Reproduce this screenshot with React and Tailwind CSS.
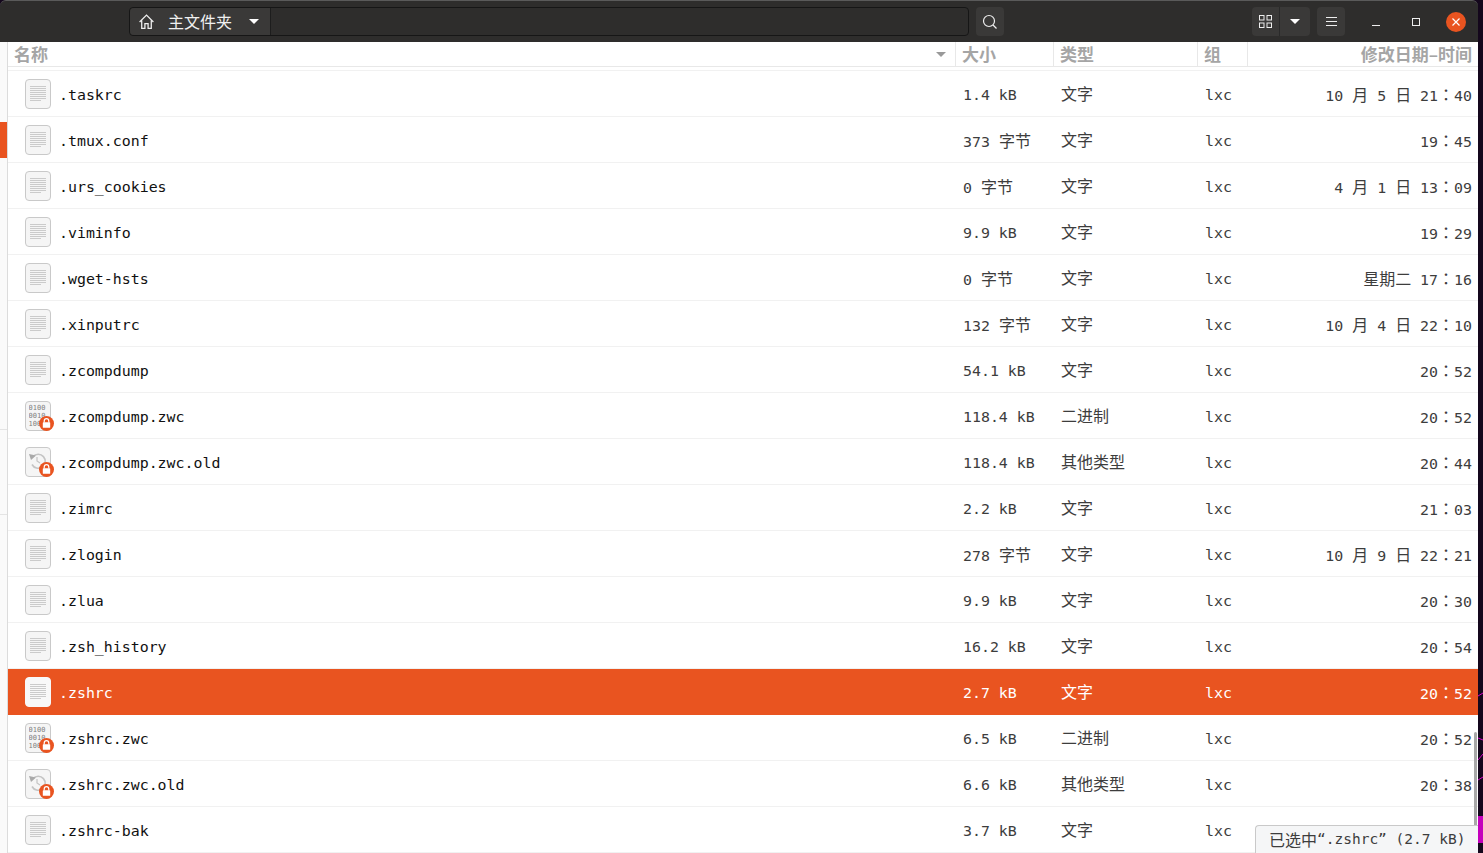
import React from 'react';

const mono = "font-['DejaVu_Sans_Mono','Noto_Sans_CJK_SC',monospace]";

const files = [
  ['.taskrc', '1.4 kB', '文字', '10 月 5 日 21：40'],
  ['.tmux.conf', '373 字节', '文字', '19：45'],
  ['.urs_cookies', '0 字节', '文字', '4 月 1 日 13：09'],
  ['.viminfo', '9.9 kB', '文字', '19：29'],
  ['.wget-hsts', '0 字节', '文字', '星期二 17：16'],
  ['.xinputrc', '132 字节', '文字', '10 月 4 日 22：10'],
  ['.zcompdump', '54.1 kB', '文字', '20：52'],
  ['.zcompdump.zwc', '118.4 kB', '二进制', '20：52', 'bin'],
  ['.zcompdump.zwc.old', '118.4 kB', '其他类型', '20：44', 'old'],
  ['.zimrc', '2.2 kB', '文字', '21：03'],
  ['.zlogin', '278 字节', '文字', '10 月 9 日 22：21'],
  ['.zlua', '9.9 kB', '文字', '20：30'],
  ['.zsh_history', '16.2 kB', '文字', '20：54'],
  ['.zshrc', '2.7 kB', '文字', '20：52'],
  ['.zshrc.zwc', '6.5 kB', '二进制', '20：52', 'bin'],
  ['.zshrc.zwc.old', '6.6 kB', '其他类型', '20：38', 'old'],
  ['.zshrc-bak', '3.7 kB', '文字', ''],
];

// latin runs stay mono, CJK runs get the wider 16px font like the GTK fallback does
const MixedText = ({ text }) =>
  text.split(/([\u4e00-\u9fff]+|：)/).map((part, i) => {
    if (part === '：') {
      return <span key={i} className="text-[16px] font-['Noto_Sans_CJK_TC',sans-serif]">{part}</span>;
    }
    if (/[\u4e00-\u9fff]/.test(part)) {
      return <span key={i} className="text-[16px] font-['Noto_Sans_CJK_SC',sans-serif]">{part}</span>;
    }
    return <span key={i}>{part}</span>;
  });

const FileIcon = ({ kind, selected }) => (
  <div className="relative w-[26px] h-[30px] shrink-0">
    <div className={`w-[26px] h-[30px] rounded-[4px] border flex flex-col items-center justify-center ${selected ? 'bg-[#f8f8f8] border-[#f8f8f8]' : 'bg-[#f5f5f5] border-[#c9c9c9]'}`}>
      {!kind && (
        <div className="flex flex-col gap-[1px] w-4">
          {[...Array(8)].map((_, i) => (
            <div key={i} className={`h-px bg-[#cbcbcb] ${i === 7 ? 'w-2/3' : ''}`} />
          ))}
        </div>
      )}
      {kind === 'bin' && (
        <div className="font-['DejaVu_Sans_Mono',monospace] text-[7px] leading-[8px] text-[#808080] w-[17px] -ml-[2px] mt-[1px] overflow-hidden whitespace-pre">
          <div>0100</div>
          <div>0010</div>
          <div>1001</div>
        </div>
      )}
      {kind === 'old' && (
        <svg width="20" height="20" viewBox="0 0 20 20" fill="none" className="-ml-[2px] -mt-[2px]">
          <path d="M6 5.5a7 7 0 1 1-1 8" stroke="#c4c4c4" strokeWidth="1.6" />
          <path d="M2 3l7 1.5L4 9z" fill="#a9a9a9" />
          <path d="M10 6v4l3 2" stroke="#c4c4c4" strokeWidth="1.2" />
        </svg>
      )}
    </div>
    {kind && (
      <div className="absolute -right-[3px] bottom-0 w-[15px] h-[15px] rounded-full bg-[#e95420] flex items-center justify-center">
        <svg width="9" height="10" viewBox="0 0 9 10">
          <path d="M2.2 4.5V3a2.3 2.3 0 0 1 4.6 0v1.5" fill="none" stroke="#fff" strokeWidth="1.2" />
          <rect x="0.8" y="4.3" width="7.4" height="5.5" rx="0.6" fill="#fff" />
        </svg>
      </div>
    )}
  </div>
);

const Row = ({ file }) => {
  const [name, size, type, date, kind] = file;
  const selected = name === '.zshrc';
  return (
    <div className={`flex items-center h-[46px] border-b text-[14.9px] leading-[20px] ${mono} ${selected ? 'bg-[#e95420] border-[#e95420] text-white' : 'border-[#f1f1f1] text-[#3d3d3d]'}`}>
      <div className="w-[947px] flex items-center pl-[17px] gap-[8px]">
        <FileIcon kind={kind} selected={selected} />
        <span className={`pt-[3px] ${selected ? 'text-white' : 'text-[#111]'}`}>{name}</span>
      </div>
      <div className="w-[98px] pl-2 pt-[3px] whitespace-pre"><MixedText text={size} /></div>
      <div className="w-[145px] pl-[8px] pb-[2px] text-[16px] font-['Noto_Sans_CJK_SC',sans-serif]">{type}</div>
      <div className="w-[90px] pl-[7px] pt-[3px]">lxc</div>
      <div className="flex-1 text-right pr-[6px] pt-[3px] whitespace-pre"><MixedText text={date} /></div>
    </div>
  );
};

const HeaderCell = ({ className, children }) => (
  <div className={`h-full flex items-center border-r border-[#e8e8e8] ${className}`}>{children}</div>
);

export default function App() {
  return (
    <div className="h-[853px] w-[1483px] overflow-hidden bg-[#14071c] flex flex-col font-['Noto_Sans_CJK_SC',sans-serif]">
      <div className="h-[42px] w-[1478px] shrink-0 bg-[#2e2d2c] rounded-t-[6px] border-t border-[#5a5a5a] flex items-center">
        <div className="ml-[129px] w-[840px] h-[29px] rounded-[4px] border border-[#161616] bg-[#2e2d2c] flex items-center text-[#f0f0f0]">
          <div className="w-[141px] h-full border-r border-[#1d1d1d] bg-[#3a3938] rounded-l-[4px] flex items-center pl-[8px]">
            <svg width="17" height="17" viewBox="0 0 16 16" fill="none" stroke="#eee" strokeWidth="1.2">
              <path d="M1.5 8.5L8 2l6.5 6.5M3.5 7v7.5h3V10h3v4.5h3V7" />
            </svg>
            <span className="ml-[13px] text-[16px] leading-[20px] pb-[2px]">主文件夹</span>
            <div className="ml-[17px] w-0 h-0 border-x-[5px] border-x-transparent border-t-[5px] border-t-white" />
          </div>
        </div>
        <div className="ml-[7px] w-[28px] h-[29px] rounded-[4px] bg-[#3a3938] flex items-center justify-center">
          <svg width="16" height="16" viewBox="0 0 16 16" fill="none" stroke="#eee" strokeWidth="1.2">
            <circle cx="7" cy="7" r="5.5" />
            <path d="M11 11l3.5 3.5" />
          </svg>
        </div>
        <div className="ml-[248px] flex h-[29px] rounded-[4px] bg-[#3a3938]">
          <div className="w-[28px] flex items-center justify-center border-r border-[#2a2a2a]">
            <svg width="13" height="13" viewBox="0 0 13 13" fill="none" stroke="#eee">
              <rect x="0.5" y="0.5" width="4.5" height="4.5" />
              <rect x="8" y="0.5" width="4.5" height="4.5" />
              <rect x="0.5" y="8" width="4.5" height="4.5" />
              <rect x="8" y="8" width="4.5" height="4.5" />
            </svg>
          </div>
          <div className="w-[30px] flex items-center justify-center">
            <div className="w-0 h-0 border-x-[5px] border-x-transparent border-t-[5px] border-t-white" />
          </div>
        </div>
        <div className="ml-[7px] w-[28px] h-[29px] rounded-[4px] bg-[#3a3938] flex flex-col gap-[3px] items-center justify-center">
          <div className="w-[11px] h-px bg-[#eee]" />
          <div className="w-[11px] h-px bg-[#eee]" />
          <div className="w-[11px] h-px bg-[#eee]" />
        </div>
        <div className="ml-[27px] w-[8px] h-px bg-[#eee] mt-[8px]" />
        <div className="ml-[32px] w-[8px] h-[8px] border border-[#eee]" />
        <div className="ml-[26px] w-[20px] h-[20px] rounded-full bg-[#e95420] flex items-center justify-center">
          <svg width="10" height="10" viewBox="0 0 10 10" stroke="#fff" strokeWidth="1.2">
            <path d="M1.5 1.5l7 7M8.5 1.5l-7 7" />
          </svg>
        </div>
      </div>

      <div className="flex-1 flex min-h-0">
        <div className="w-[8px] shrink-0 bg-[#fafafa] border-r border-[#dcdcdc] flex flex-col">
          <div className="mt-[80px] h-[36px] w-[7px] bg-[#e95420]" />
          <div className="mt-[271px] h-px w-[7px] bg-[#e4e4e4]" />
          <div className="mt-[84px] h-px w-[7px] bg-[#e4e4e4]" />
        </div>
        <div className="relative w-[1470px] bg-white">
          <div className="h-[25px] border-b border-[#e8e8e8] flex items-center text-[17px] leading-[22px] font-bold text-[#a5a5a5]">
            <HeaderCell className="w-[948px] pl-[6px] justify-between pr-[9px]">
              <span>名称</span>
              <div className="w-0 h-0 border-x-[5px] border-x-transparent border-t-[5px] border-t-[#999]" />
            </HeaderCell>
            <HeaderCell className="w-[98px] pl-[6px]">大小</HeaderCell>
            <HeaderCell className="w-[144px] pl-[6px]">类型</HeaderCell>
            <HeaderCell className="w-[50px] pl-[6px]">组</HeaderCell>
            <div className="flex-1 text-right pr-[6px]">修改日期–时间</div>
          </div>
          <div className="h-[4px] border-b border-[#f1f1f1]" />
          {files.map((f) => (
            <Row key={f[0]} file={f} />
          ))}
          <div className="absolute right-[1px] top-[690px] w-[3px] h-[121px] bg-[#a8a8a8] rounded-full" />
          <div className={`absolute right-0 bottom-0 w-[223px] h-[28px] bg-[#f5f6f7] border-t border-l border-[#c9c9c9] rounded-tl-[4px] pl-[13px] pb-[2px] flex items-center text-[14.5px] leading-[20px] text-[#3d3d3d] whitespace-pre ${mono}`}>
            <MixedText text="已选中“.zshrc” (2.7 kB)" />
          </div>
        </div>
        <div className="flex-1 flex flex-col justify-end pb-[10px]">
          <svg width="5" height="140" viewBox="0 0 5 140" fill="none" stroke="#d400c8" strokeWidth="1">
            <path d="M0 20l5-3M0 62l5 2M0 84l5-6M0 104l5-3" />
          </svg>
          <div className="h-[27px] bg-[#c400bc]" />
        </div>
      </div>
    </div>
  );
}
